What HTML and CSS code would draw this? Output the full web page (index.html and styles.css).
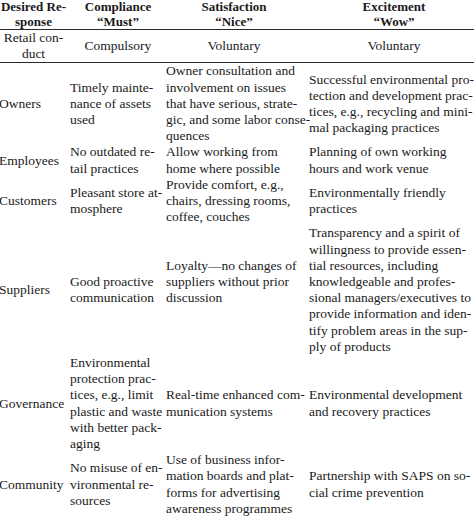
FILE: index.html
```html
<!DOCTYPE html>
<html lang="en">
<head>
<meta charset="utf-8">
<title>Desired Response Table</title>
<link rel="stylesheet" href="styles.css">
</head>
<body>
<div class="table">
  <div class="row head">
    <div class="cell c1">Desired Re-<br>sponse</div>
    <div class="cell c2">Compliance<br>“Must”</div>
    <div class="cell c3">Satisfaction<br>“Nice”</div>
    <div class="cell c4">Excitement<br>“Wow”</div>
  </div>
  <div class="row sub">
    <div class="cell c1">Retail con-<br>duct</div>
    <div class="cell c2">Compulsory</div>
    <div class="cell c3">Voluntary</div>
    <div class="cell c4">Voluntary</div>
  </div>
  <div class="row">
    <div class="cell c1">Owners</div>
    <div class="cell c2">Timely mainte-<br>nance of assets<br>used</div>
    <div class="cell c3">Owner consultation and<br>involvement on issues<br>that have serious, strate-<br>gic, and some labor conse-<br>quences</div>
    <div class="cell c4">Successful environmental pro-<br>tection and development prac-<br>tices, e.g., recycling and mini-<br>mal packaging practices</div>
  </div>
  <div class="row">
    <div class="cell c1">Employees</div>
    <div class="cell c2">No outdated re-<br>tail practices</div>
    <div class="cell c3">Allow working from<br>home where possible</div>
    <div class="cell c4">Planning of own working<br>hours and work venue</div>
  </div>
  <div class="row">
    <div class="cell c1">Customers</div>
    <div class="cell c2">Pleasant store at-<br>mosphere</div>
    <div class="cell c3">Provide comfort, e.g.,<br>chairs, dressing rooms,<br>coffee, couches</div>
    <div class="cell c4">Environmentally friendly<br>practices</div>
  </div>
  <div class="row">
    <div class="cell c1">Suppliers</div>
    <div class="cell c2">Good proactive<br>communication</div>
    <div class="cell c3 raised">Loyalty—no changes of<br>suppliers without prior<br>discussion</div>
    <div class="cell c4">Transparency and a spirit of<br>willingness to provide essen-<br>tial resources, including<br>knowledgeable and profes-<br>sional managers/executives to<br>provide information and iden-<br>tify problem areas in the sup-<br>ply of products</div>
  </div>
  <div class="row">
    <div class="cell c1">Governance</div>
    <div class="cell c2">Environmental<br>protection prac-<br>tices, e.g., limit<br>plastic and waste<br>with better pack-<br>aging</div>
    <div class="cell c3">Real-time enhanced com-<br>munication systems</div>
    <div class="cell c4">Environmental development<br>and recovery practices</div>
  </div>
  <div class="row">
    <div class="cell c1">Community</div>
    <div class="cell c2">No misuse of en-<br>vironmental re-<br>sources</div>
    <div class="cell c3">Use of business infor-<br>mation boards and plat-<br>forms for advertising<br>awareness programmes</div>
    <div class="cell c4">Partnership with SAPS on so-<br>cial crime prevention</div>
  </div>
</div>
</body>
</html>
```
FILE: styles.css
```css
html, body {
  margin: 0;
  padding: 0;
  overflow: hidden;
  background: #ffffff;
}

body {
  font-family: "Liberation Serif", "Times New Roman", serif;
  font-size: 13.5px;
  line-height: 16.2px;
  color: #1a1a1a;
}

.table {
  width: 480px;
  margin: -1px 0 0 -1px;
}

.row {
  display: grid;
  grid-template-columns: 69px 98px 140px 173px;
  align-items: center;
}

.cell {
  white-space: nowrap;
}

.c2 {
  padding-left: 2px;
}

.c3 {
  padding-right: 4px;
}

.c4 {
  padding-left: 3px;
}

.head {
  font-weight: bold;
  font-size: 13px;
  line-height: 15px;
  text-align: center;
  border-bottom: 1px solid #2a2a2a;
}

.sub {
  text-align: center;
  border-bottom: 1px solid #2a2a2a;
}

.raised {
  padding-bottom: 16.2px;
}
```
